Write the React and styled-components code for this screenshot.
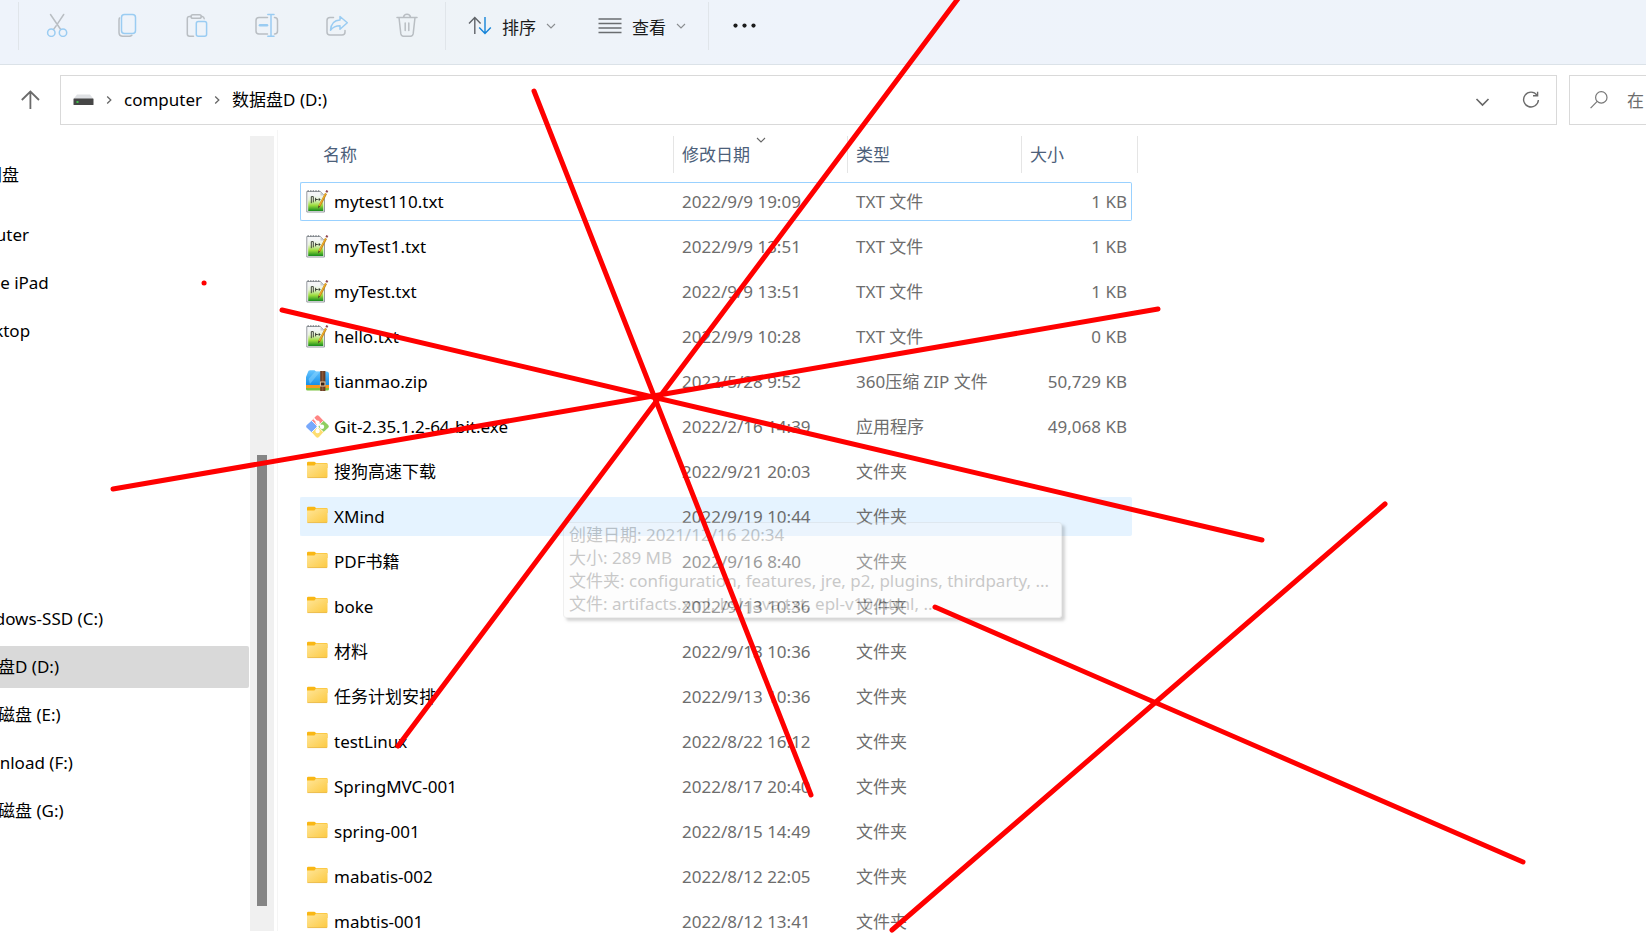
import React, { useState } from "react";
import styled, { createGlobalStyle } from "styled-components";

const GlobalStyle = createGlobalStyle`
  * {
    box-sizing: border-box;
  }

  body {
    margin: 0;
    background: #ffffff;
    color: #000000;
    font-family: "Noto Sans", "Noto Sans CJK SC", sans-serif;
    font-size: 17px;
    line-height: 23px;
  }

  button,
  input {
    font: inherit;
    color: inherit;
    padding: 0;
    border: none;
    background: none;
    outline: none;
  }

  svg {
    display: block;
    flex-shrink: 0;
  }
`;

// Styled Components
const Window = styled.div`
  position: relative;
  display: flex;
  flex-direction: column;
  height: 100vh;
  overflow: hidden;
`;

const Toolbar = styled.header`
  display: flex;
  align-items: center;
  flex-shrink: 0;
  height: 65px;
  padding: 0 0 14px 18px;
  background: linear-gradient(90deg, #eef3fb, #eef3f7 25%, #eef3fb 48%, #eef3fa);
  border-bottom: 1px solid #dbe2e8;
`;

const Divider = styled.span`
  align-self: flex-end;
  width: 1px;
  height: 48px;
  background: #e0e5ea;
`;

const ToolGroup = styled.div`
  display: flex;
  align-items: center;
  gap: ${(props) => props.$gap}px;
  padding: 0 ${(props) => props.$padding}px;
`;

const ToolButton = styled.button`
  display: flex;
  align-items: center;
  gap: 10px;
  color: #1b1b1b;
  cursor: pointer;

  &:disabled {
    cursor: default;
  }
`;

const ToolLabel = styled.span`
  padding-top: 4px;
`;

const NavBar = styled.div`
  display: flex;
  align-items: center;
  flex-shrink: 0;
  gap: 12px;
  padding: 10px 0 5px 20px;
`;

const IconButton = styled.button`
  display: flex;
  cursor: pointer;
`;

const AddressBar = styled.nav`
  flex: 1;
  display: flex;
  align-items: center;
  gap: 11px;
  height: 50px;
  margin-left: 8px;
  padding: 0 16px 0 12px;
  border: 1px solid #d9d9d9;
`;

const Crumb = styled.button`
  padding-bottom: 2px;
  cursor: pointer;
`;

const AddressActions = styled.div`
  display: flex;
  align-items: center;
  gap: 32px;
  margin-left: auto;
`;

const SearchBox = styled.label`
  display: flex;
  align-items: center;
  gap: 18px;
  width: 77px;
  height: 50px;
  padding-left: 20px;
  border: 1px solid #d9d9d9;
  border-right: none;
  overflow: hidden;
`;

const SearchInput = styled.input`
  flex: 1;
  min-width: 0;

  &::placeholder {
    color: #6d6d6d;
    opacity: 1;
  }
`;

const Main = styled.main`
  flex: 1;
  display: flex;
  min-height: 0;
  padding-bottom: 3px;
`;

const Sidebar = styled.nav`
  width: 250px;
  flex-shrink: 0;
  padding: 24px 1px 0 0;
  overflow: hidden;
`;

// The tree is scrolled sideways, so its labels start left of the pane
const Tree = styled.ul`
  list-style: none;
  margin: 0 0 0 -49px;
  padding: 0;
`;

const TreeItem = styled.li`
  margin-bottom: ${(props) => props.$space || 6}px;
`;

const TreeLink = styled.a`
  display: flex;
  align-items: center;
  height: 42px;
  padding-bottom: 2px;
  padding-left: ${(props) => (props.$nested ? 13 : 0)}px;
  border-radius: 2px;
  background: ${(props) => (props.$active ? "#d9d9d9" : "transparent")};
  color: inherit;
  text-decoration: none;
  white-space: nowrap;
`;

const ScrollTrack = styled.div`
  display: flex;
  flex-direction: column;
  align-items: center;
  width: 24px;
  margin-top: 6px;
  background: #f0f0f0;
`;

const ScrollSpace = styled.span`
  flex: ${(props) => props.$grow};
`;

const ScrollThumb = styled.div`
  flex: 451;
  width: 10px;
  background: #858585;
`;

const FilePane = styled.section`
  position: relative;
  flex: 1;
  min-width: 0;
  margin-left: 3px;
  padding-left: 22px;
  border-left: 1px solid #f5f5f5;
  overflow: hidden;
`;

const FileTable = styled.table`
  width: 838px;
  table-layout: fixed;
  border-collapse: separate;
  border-spacing: 0 6px;
`;

const Col = styled.col`
  width: ${(props) => props.$width}px;
`;

const HeadCell = styled.th`
  height: 40px;
  padding: 0;
  vertical-align: top;
  text-align: left;
  font-weight: 400;
`;

const HeadButton = styled.button`
  position: relative;
  display: flex;
  align-items: center;
  width: 100%;
  height: 37px;
  padding-left: ${(props) => props.$indent || 8}px;
  border-right: 1px solid #e5e5e5;
  color: #4c607a;
`;

const SortMark = styled.span`
  position: absolute;
  top: -2px;
  left: calc(50% - 5px);
`;

const Cell = styled.td`
  height: 39px;
  padding: 0 ${(props) => (props.$right ? 4 : 0)}px 0 8px;
  border: 1px solid transparent;
  border-width: 1px 0;
  color: #6d6d6d;
  text-align: ${(props) => (props.$right ? "right" : "left")};
  white-space: nowrap;
`;

const NameCell = styled(Cell)`
  padding-left: 5px;
  color: #000000;
`;

const EdgeCell = styled.td`
  padding: 0;
`;

const Row = styled.tr`
  ${Cell} {
    background: ${(props) => (props.$hovered ? "#e5f3ff" : "transparent")};
    border-color: ${(props) =>
      props.$focused ? "#99d1ff" : props.$hovered ? "#e5f3ff" : "transparent"};
  }

  ${Cell}:first-child {
    border-left-width: 1px;
    border-radius: 2px 0 0 2px;
  }

  ${Cell}:nth-child(4) {
    border-right-width: 1px;
    border-radius: 0 2px 2px 0;
  }
`;

const FileName = styled.div`
  display: flex;
  align-items: center;
  gap: 4px;
`;

const Tooltip = styled.div`
  position: absolute;
  top: 392px;
  left: 285px;
  width: 499px;
  padding: 0 5px 2px;
  border: 1px solid #d0d0d0;
  border-radius: 3px;
  background: #f9f9f9;
  box-shadow: 3px 3px 3px rgba(0, 0, 0, 0.5);
  color: #575757;
  opacity: 0.32;
  white-space: nowrap;
`;

const Strokes = styled.svg`
  position: absolute;
  top: 0;
  left: 0;
  width: 100%;
  height: 100%;
  pointer-events: none;
`;

// Icons
const GRAY = "#b9bec3";
const BLUE = "#9accf2";

const ToolIcon = ({ children }) => (
  <svg
    width="24"
    height="24"
    viewBox="0 0 24 24"
    fill="none"
    stroke={GRAY}
    strokeWidth="1.5"
    strokeLinecap="round"
    strokeLinejoin="round"
  >
    {children}
  </svg>
);

const CutIcon = () => (
  <ToolIcon>
    <path d="M5.5 1.5L15.7 16.5M18.7 1.5L12.8 10.4M11.2 12.8L8.4 16.6" />
    <g stroke={BLUE}>
      <circle cx="6.3" cy="19.7" r="3.7" />
      <circle cx="18" cy="19.7" r="3.7" />
    </g>
  </ToolIcon>
);

const CopyIcon = () => (
  <ToolIcon>
    <path d="M4.5 5Q4 5.8 4 7.5V19.5Q4 23.3 8 23.3H14.2Q16 23.3 16.8 22.3" />
    <rect x="6.5" y="1.5" width="14" height="19" rx="3" stroke={BLUE} />
  </ToolIcon>
);

const PasteIcon = () => (
  <ToolIcon>
    <path d="M6 3.5H4.5Q2.3 3.5 2.3 5.7V21Q2.3 23.2 4.5 23.2H8.5M16.3 3.5H17.3Q19 3.7 19.2 5.8" />
    <rect x="6" y="1.7" width="10.3" height="3.6" rx="1.8" />
    <rect x="11.3" y="8.5" width="10.3" height="14.7" rx="2" stroke={BLUE} />
  </ToolIcon>
);

const RenameIcon = () => (
  <ToolIcon>
    <path d="M12.5 4.5H4Q1 4.5 1 7.5V18Q1 21 4 21H12.5M19.5 4.5Q22.5 4.5 22.5 7.5V18Q22.5 21 19.5 21" />
    <path d="M12.8 1.5H19M16 1.5V23.2M12.8 23.2H19" stroke={BLUE} />
    <path d="M5 12.2H12" stroke={BLUE} strokeWidth="2.6" />
  </ToolIcon>
);

const ShareIcon = () => (
  <ToolIcon>
    <path d="M8.5 4.5H5Q2 4.5 2 7.5V19Q2 22 5 22H17Q20 22 20 19V17.5" />
    <path
      d="M15 3.5L22.3 9.8L15 16.2V12.8C10.5 12.8 8 14 5.5 17.2C6 11 9 7.3 15 7Z"
      stroke={BLUE}
    />
  </ToolIcon>
);

const DeleteIcon = () => (
  <ToolIcon>
    <path d="M2 4.5H22M8.5 4.2Q9 1.2 12 1.2T15.5 4.2M4 4.5L5.8 20.7Q6.2 23.2 8.4 23.2H15.6Q17.8 23.2 18.2 20.7L20 4.5M10.2 10V17.5M13.8 10V17.5" />
  </ToolIcon>
);

const SortIcon = () => (
  <svg width="24" height="20" viewBox="0 0 24 20" fill="none" strokeWidth="1.4">
    <path d="M6.8 19V3M1 8.5L6.8 2.5L12.6 8.5" stroke="#5f6368" />
    <path d="M17 2V18M11.2 12.5L17 18.5L22.8 12.5" stroke="#1583d8" />
  </svg>
);

const ViewIcon = () => (
  <svg width="24" height="18" viewBox="0 0 24 18" stroke="#6a6d70" strokeWidth="1.5">
    <path d="M0.5 3H23.5M0.5 7.5H23.5M0.5 12H23.5M0.5 16.5H23.5" />
  </svg>
);

const Chevron = ({ size = 10, color = "#8a8d90" }) => (
  <svg
    width={size}
    height={size}
    viewBox="0 0 10 10"
    fill="none"
    stroke={color}
    strokeWidth="1.1"
  >
    <path d="M1 4L5 8L9 4" />
  </svg>
);

const CrumbArrow = () => (
  <svg width="8" height="10" viewBox="0 0 8 10" fill="none" stroke="#666" strokeWidth="1.3">
    <path d="M2.2 1.5L5.8 5L2.2 8.5" />
  </svg>
);

const MoreIcon = () => (
  <svg width="24" height="6" viewBox="0 0 24 6" fill="#1b1b1b">
    <circle cx="2.5" cy="3.6" r="2.1" />
    <circle cx="11.5" cy="3.6" r="2.1" />
    <circle cx="20.5" cy="3.6" r="2.1" />
  </svg>
);

const UpIcon = () => (
  <svg width="20" height="20" viewBox="0 0 20 20" fill="none" stroke="#6b6b6b" strokeWidth="1.8">
    <path d="M10.4 19V2M1.8 10L10.4 1.5L19 10" />
  </svg>
);

const DriveIcon = () => (
  <svg width="21" height="12" viewBox="0 0 21 12">
    <path d="M4 0.5H17L20.5 5H0.5Z" fill="#dfe1e4" />
    <rect x="0.5" y="4.5" width="20" height="6.5" rx="0.6" fill="#464646" />
    <rect x="3.5" y="7.2" width="2" height="1.6" fill="#3fe04a" />
  </svg>
);

const RefreshIcon = () => (
  <svg width="18" height="18" viewBox="0 0 18 18" fill="none" stroke="#6b6b6b" strokeWidth="1.4">
    <path d="M15 4.2A7.4 7.4 0 1 0 16.4 9" />
    <path d="M15.6 0.8V4.8H11" />
  </svg>
);

const SearchIcon = () => (
  <svg width="19" height="19" viewBox="0 0 19 19" fill="none" stroke="#777" strokeWidth="1.2">
    <circle cx="11.3" cy="6.4" r="5.7" />
    <path d="M7.2 10.4L0.6 17.2" />
  </svg>
);

const TextFileIcon = () => (
  <svg width="24" height="24" viewBox="0 0 24 24">
    <defs>
      <linearGradient id="note" x1="0" y1="0" x2="0" y2="1">
        <stop offset="0" stopColor="#f3f6f8" />
        <stop offset="0.3" stopColor="#e6f3d4" />
        <stop offset="0.65" stopColor="#9bdc3c" />
        <stop offset="1" stopColor="#158a1c" />
      </linearGradient>
    </defs>
    <path d="M0.8 1.5H14.5L18.5 5.5V22H0.8Z" fill="#f5f6f7" stroke="#969ba0" />
    <path d="M2.2 5H17.3V21H2.2Z" fill="url(#note)" />
    <path d="M1.5 0.9H14.5" stroke="#5f656a" strokeDasharray="1.4 1.2" />
    <path d="M14.5 1.5V5.5H18.5Z" fill="#c9ced2" />
    <path
      d="M5.3 13.2V6.6H7.3V12.4M9.6 7.8V11.4M9.6 9.5H11.8M13.2 8.2V10.8M12.6 9.5H14.4"
      fill="none"
      stroke="#2c3326"
      strokeWidth="0.9"
    />
    <path d="M20 3.5L13.4 16.2" stroke="#c1851a" strokeWidth="2.2" />
    <path d="M19.7 3.5L13.3 15.8" stroke="#efae2c" strokeWidth="1.1" />
    <path d="M20.4 2.4L21.3 0.5" stroke="#8d4650" strokeWidth="2.2" />
    <path d="M12.4 15.6L12 18.4L14.2 16.6Z" fill="#5a4528" />
  </svg>
);

const ZipIcon = () => (
  <svg width="24" height="24" viewBox="0 0 24 24">
    <defs>
      <linearGradient id="zip" x1="0" y1="0" x2="0" y2="1">
        <stop offset="0" stopColor="#65c5ff" />
        <stop offset="1" stopColor="#168fe8" />
      </linearGradient>
    </defs>
    <rect x="0" y="13" width="23" height="7.5" rx="1.5" fill="#7cc23f" />
    <rect x="0" y="13" width="23" height="5" fill="#f79a1c" />
    <path d="M2 2Q2.2 0.2 4 0.2H8.5L10 1.5H20.5Q23 1.5 23 4V15H0V7Z" fill="url(#zip)" />
    <path d="M2.5 9L9 1.8H14L4 14Z" fill="#8bd5ff" opacity="0.5" />
    <rect x="14.2" y="1" width="5.2" height="20" fill="#6b3d25" />
    <rect x="15.8" y="1" width="1.6" height="20" fill="#8b5838" />
    <rect x="14.4" y="12" width="4.6" height="4" fill="#3a2116" stroke="#eac9a0" />
  </svg>
);

const GitIcon = () => (
  <svg width="24" height="24" viewBox="0 0 24 24">
    <path d="M5.5 6L10 0.9Q11.5 -0.4 13 0.9L17.7 5.9L11.6 11.6Z" fill="#ff8583" />
    <path d="M17.3 5.5L22.2 10Q23.6 11.4 22.2 12.8L17.3 17.2L11.6 11.6Z" fill="#8fce5f" />
    <path d="M17.7 16.8L13 22Q11.5 23.4 10 22L5.5 17L11.6 11.6Z" fill="#fddd70" />
    <path d="M5.9 17.4L0.8 12.8Q-0.5 11.4 0.8 10L5.9 5.4L11.6 11.6Z" fill="#78a8fb" />
    <path
      d="M5.6 5.6L17.6 17.2M17.6 5.6L5.6 17.4"
      stroke="#fff"
      strokeWidth="0.9"
      fill="none"
    />
    <path d="M7.7 3.3L11.6 7.5V16M11.6 7.8L16 11.8" stroke="#fff" strokeWidth="1.8" fill="none" />
    <g fill="#fff">
      <circle cx="11.6" cy="7.5" r="2.1" />
      <circle cx="11.6" cy="16" r="2.2" />
      <circle cx="16" cy="11.8" r="2.2" />
    </g>
  </svg>
);

const FolderIcon = () => (
  <svg width="24" height="24" viewBox="0 0 24 24">
    <defs>
      <linearGradient id="folder" x1="0" y1="0" x2="1" y2="1">
        <stop offset="0" stopColor="#ffe69b" />
        <stop offset="1" stopColor="#fcc93f" />
      </linearGradient>
    </defs>
    <path d="M1 3Q1 1.8 2.2 1.8H8Q9.3 1.8 9.8 3H20.2Q21.5 3 21.5 4.2V8H1Z" fill="#f9b715" />
    <path
      d="M1 5.4H8.4L10 3.6H21.5V16.8Q21.5 18 20.3 18H2.2Q1 18 1 16.8Z"
      fill="url(#folder)"
    />
    <path d="M1.5 17.6H21" stroke="#e5b54a" strokeWidth="0.7" />
  </svg>
);

const FILE_ICONS = {
  text: TextFileIcon,
  zip: ZipIcon,
  git: GitIcon,
  folder: FolderIcon,
};

const tools = [
  { label: "剪切", Icon: CutIcon },
  { label: "复制", Icon: CopyIcon },
  { label: "粘贴", Icon: PasteIcon },
  { label: "重命名", Icon: RenameIcon },
  { label: "共享", Icon: ShareIcon },
  { label: "删除", Icon: DeleteIcon },
];

const treeItems = [
  { name: "百度网盘", space: 18 },
  { name: "computer" },
  { name: "Apple iPad", nested: true },
  { name: "Desktop", nested: true, space: 246 },
  { name: "Windows-SSD (C:)", nested: true },
  { name: "数据盘D (D:)", nested: true },
  { name: "本地磁盘 (E:)", nested: true },
  { name: "Download (F:)", nested: true },
  { name: "本地磁盘 (G:)", nested: true },
];

const files = [
  { name: "mytest110.txt", date: "2022/9/9 19:09", type: "TXT 文件", size: "1 KB", icon: "text" },
  { name: "myTest1.txt", date: "2022/9/9 13:51", type: "TXT 文件", size: "1 KB", icon: "text" },
  { name: "myTest.txt", date: "2022/9/9 13:51", type: "TXT 文件", size: "1 KB", icon: "text" },
  { name: "hello.txt", date: "2022/9/9 10:28", type: "TXT 文件", size: "0 KB", icon: "text" },
  { name: "tianmao.zip", date: "2022/5/28 9:52", type: "360压缩 ZIP 文件", size: "50,729 KB", icon: "zip" },
  { name: "Git-2.35.1.2-64-bit.exe", date: "2022/2/16 14:39", type: "应用程序", size: "49,068 KB", icon: "git" },
  { name: "搜狗高速下载", date: "2022/9/21 20:03" },
  { name: "XMind", date: "2022/9/19 10:44" },
  { name: "PDF书籍", date: "2022/9/16 8:40" },
  { name: "boke", date: "2022/9/13 10:36" },
  { name: "材料", date: "2022/9/13 10:36" },
  { name: "任务计划安排", date: "2022/9/13 10:36" },
  { name: "testLinux", date: "2022/8/22 16:12" },
  { name: "SpringMVC-001", date: "2022/8/17 20:40" },
  { name: "spring-001", date: "2022/8/15 14:49" },
  { name: "mabatis-002", date: "2022/8/12 22:05" },
  { name: "mabtis-001", date: "2022/8/12 13:41" },
];

const FileRow = ({ file, focused, hovered, onSelect }) => {
  const Icon = FILE_ICONS[file.icon || "folder"];

  return (
    <Row $focused={focused} $hovered={hovered} onClick={onSelect}>
      <NameCell>
        <FileName>
          <Icon />
          {file.name}
        </FileName>
      </NameCell>
      <Cell>{file.date}</Cell>
      <Cell>{file.type || "文件夹"}</Cell>
      <Cell $right>{file.size}</Cell>
      <EdgeCell />
    </Row>
  );
};

const App = () => {
  const [focused, setFocused] = useState("mytest110.txt");
  const [location, setLocation] = useState("数据盘D (D:)");

  return (
    <>
      <GlobalStyle />
      <Window>
        <Toolbar>
          <Divider />
          <ToolGroup $gap={46} $padding={26}>
            {tools.map(({ label, Icon }) => (
              <ToolButton key={label} aria-label={label} disabled>
                <Icon />
              </ToolButton>
            ))}
          </ToolGroup>
          <Divider />
          <ToolGroup $gap={42} $padding={22}>
            <ToolButton>
              <SortIcon />
              <ToolLabel>排序</ToolLabel>
              <Chevron />
            </ToolButton>
            <ToolButton>
              <ViewIcon />
              <ToolLabel>查看</ToolLabel>
              <Chevron />
            </ToolButton>
          </ToolGroup>
          <Divider />
          <ToolGroup $gap={0} $padding={24}>
            <ToolButton aria-label="更多">
              <MoreIcon />
            </ToolButton>
          </ToolGroup>
        </Toolbar>

        <NavBar>
          <IconButton aria-label="向上">
            <UpIcon />
          </IconButton>
          <AddressBar>
            <DriveIcon />
            <CrumbArrow />
            <Crumb>computer</Crumb>
            <CrumbArrow />
            <Crumb>数据盘D (D:)</Crumb>
            <AddressActions>
              <IconButton aria-label="历史记录">
                <Chevron size={15} color="#666" />
              </IconButton>
              <IconButton aria-label="刷新">
                <RefreshIcon />
              </IconButton>
            </AddressActions>
          </AddressBar>
          <SearchBox>
            <SearchIcon />
            <SearchInput placeholder="在 数据盘D (D:) 中搜索" aria-label="搜索" />
          </SearchBox>
        </NavBar>

        <Main>
          <Sidebar>
            <Tree>
              {treeItems.map((item) => (
                <TreeItem key={item.name} $space={item.space}>
                  <TreeLink
                    href="#"
                    $nested={item.nested}
                    $active={item.name === location}
                    onClick={() => setLocation(item.name)}
                  >
                    {item.name}
                  </TreeLink>
                </TreeItem>
              ))}
            </Tree>
          </Sidebar>
          <ScrollTrack>
            <ScrollSpace $grow={319} />
            <ScrollThumb />
            <ScrollSpace $grow={25} />
          </ScrollTrack>

          <FilePane>
            <FileTable>
              <colgroup>
                <Col $width={374} />
                <Col $width={174} />
                <Col $width={174} />
                <Col $width={110} />
                <Col $width={6} />
              </colgroup>
              <thead>
                <tr>
                  <HeadCell>
                    <HeadButton $indent={23}>名称</HeadButton>
                  </HeadCell>
                  <HeadCell>
                    <HeadButton>
                      修改日期
                      <SortMark>
                        <Chevron color="#666" />
                      </SortMark>
                    </HeadButton>
                  </HeadCell>
                  <HeadCell>
                    <HeadButton>类型</HeadButton>
                  </HeadCell>
                  <HeadCell colSpan={2}>
                    <HeadButton>大小</HeadButton>
                  </HeadCell>
                </tr>
              </thead>
              <tbody>
                {files.map((file) => (
                  <FileRow
                    key={file.name}
                    file={file}
                    focused={file.name === focused}
                    hovered={file.name === "XMind"}
                    onSelect={() => setFocused(file.name)}
                  />
                ))}
              </tbody>
            </FileTable>

            <Tooltip role="tooltip">
              <div>创建日期: 2021/12/16 20:34</div>
              <div>大小: 289 MB</div>
              <div>文件夹: configuration, features, jre, p2, plugins, thirdparty, ...</div>
              <div>文件: artifacts.xml, bsl-java.txt, epl-v10.html, ...</div>
            </Tooltip>
          </FilePane>
        </Main>

        {/* Red pen strokes drawn over the window */}
        <Strokes stroke="#ff0000" strokeWidth="5" strokeLinecap="round">
          <path d="M534 91L811 795" />
          <path d="M960 -4L398 746" />
          <path d="M282 310L1262 540" />
          <path d="M113 489L1158 309" />
          <path d="M935 607L1523 862" />
          <path d="M1385 504L892 930" />
          <path d="M204 283H204.1" />
        </Strokes>
      </Window>
    </>
  );
};

export default App;
